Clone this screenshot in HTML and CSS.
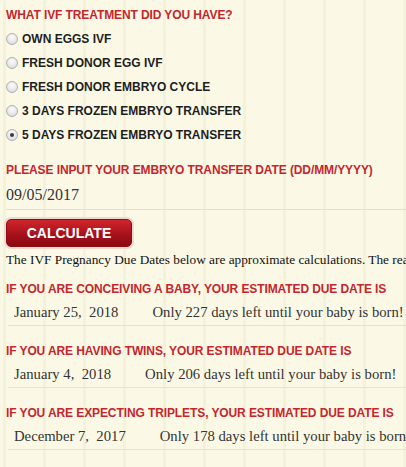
FILE: index.html
```html
<!DOCTYPE html>
<html>
<head>
<meta charset="utf-8">
<link rel="stylesheet" href="styles.css">
</head>
<body>
<div class="page">
  <div class="label">WHAT IVF TREATMENT DID YOU HAVE?</div>
  <div class="options">
    <label class="opt"><span class="radio"></span>OWN EGGS IVF</label>
    <label class="opt"><span class="radio"></span>FRESH DONOR EGG IVF</label>
    <label class="opt"><span class="radio"></span>FRESH DONOR EMBRYO CYCLE</label>
    <label class="opt"><span class="radio"></span>3 DAYS FROZEN EMBRYO TRANSFER</label>
    <label class="opt"><span class="radio checked"></span>5 DAYS FROZEN EMBRYO TRANSFER</label>
  </div>
  <div class="label label-date">PLEASE INPUT YOUR EMBRYO TRANSFER DATE (DD/MM/YYYY)</div>
  <div class="date-input">09/05/2017</div>
  <div class="btn-row"><button class="btn">CALCULATE</button></div>
  <div class="note">The IVF Pregnancy Due Dates below are approximate calculations. The real due date may vary.</div>

  <div class="result">
    <div class="label">IF YOU ARE CONCEIVING A BABY, YOUR ESTIMATED DUE DATE IS</div>
    <div class="res-row"><span class="res-date">January 25,&nbsp; 2018</span><span class="res-days">Only 227 days left until your baby is born!</span></div>
  </div>
  <div class="result">
    <div class="label">IF YOU ARE HAVING TWINS, YOUR ESTIMATED DUE DATE IS</div>
    <div class="res-row"><span class="res-date">January 4,&nbsp; 2018</span><span class="res-days">Only 206 days left until your baby is born!</span></div>
  </div>
  <div class="result">
    <div class="label">IF YOU ARE EXPECTING TRIPLETS, YOUR ESTIMATED DUE DATE IS</div>
    <div class="res-row"><span class="res-date">December 7,&nbsp; 2017</span><span class="res-days">Only 178 days left until your baby is born!</span></div>
  </div>
</div>
</body>
</html>
```

FILE: styles.css
```css
html, body {
  margin: 0;
  padding: 0;
}
body {
  width: 406px;
  height: 467px;
  overflow: hidden;
  background-color: #fbf9e6;
  background-image: repeating-linear-gradient(90deg,
    transparent 0px, transparent 3px,
    #f5f2dc 3px, #f5f2dc 6px,
    transparent 6px, transparent 40px);
  font-family: "Liberation Serif", serif;
}
.page {
  padding: 8px 0 0 6px;
  white-space: nowrap;
  overflow: hidden;
}
.label {
  font-family: "Liberation Sans", Arial, sans-serif;
  font-weight: bold;
  font-size: 12px;
  color: #c5262e;
  line-height: 14px;
  letter-spacing: -0.1px;
}
.options {
  display: flex;
  flex-direction: column;
  gap: 10px;
  margin-top: 10px;
}
.opt {
  display: flex;
  align-items: center;
  gap: 4px;
  font-family: "Liberation Sans", Arial, sans-serif;
  font-weight: bold;
  font-size: 12px;
  line-height: 14px;
  color: #1e1e1e;
}
.radio {
  width: 12px;
  height: 12px;
  border-radius: 50%;
  border: 1px solid #b0b0b0;
  background: radial-gradient(circle at 50% 35%, #fdfdfd 0%, #e6e6e6 60%, #cfcfcf 100%);
  box-sizing: border-box;
  flex: none;
  position: relative;
}
.radio.checked::after {
  content: "";
  position: absolute;
  left: 3px;
  top: 3px;
  width: 4px;
  height: 4px;
  border-radius: 50%;
  background: #3a3a3a;
}
.label-date {
  margin-top: 21px;
}
.date-input {
  font-size: 16px;
  line-height: 18px;
  color: #333;
  margin-top: 9px;
  padding-bottom: 5px;
  border-bottom: 1px solid #e2dfcf;
}
.btn-row {
  margin-top: 9px;
}
.btn {
  width: 126px;
  height: 28px;
  border-radius: 5px;
  border: 1px solid #8e0b10;
  background: linear-gradient(#d0262d, #a3101a 60%, #8c0a12);
  box-shadow: 0 0 0 2px #eadbd2;
  color: #fff;
  font-family: "Liberation Sans", Arial, sans-serif;
  font-weight: bold;
  font-size: 14px;
  padding: 0;
  display: block;
}
.note {
  font-size: 13.3px;
  line-height: 16px;
  color: #111;
  margin-top: 5px;
}
.result {
  margin-top: 14px;
}
.result + .result {
  margin-top: 18px;
}
.res-row {
  display: flex;
  font-size: 14.7px;
  line-height: 18px;
  color: #333;
  margin-top: 7px;
  padding: 0 0 4px 6px;
  border-bottom: 1px solid #e6e3d2;
  margin-left: 2px;
}
.res-date {
  margin-right: 34px;
  flex: none;
}
```
